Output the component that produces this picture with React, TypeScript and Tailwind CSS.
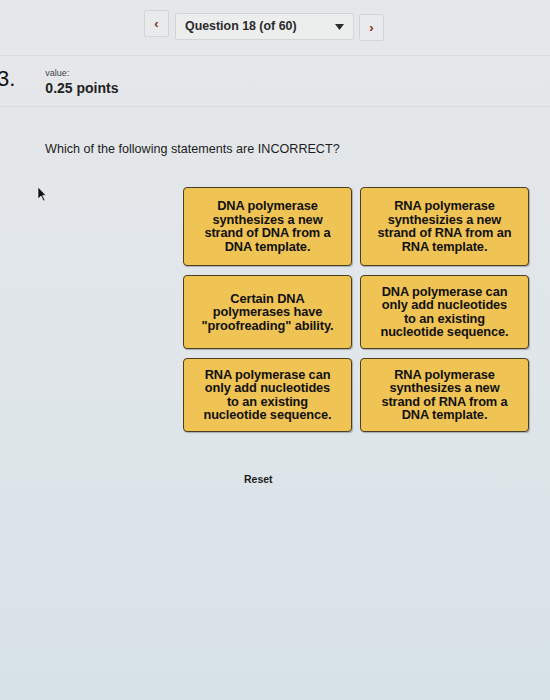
import React from "react";

const CARDS: string[][] = [
  ["DNA polymerase", "synthesizes a new", "strand of DNA from a", "DNA template."],
  ["RNA polymerase", "synthesizies a new", "strand of RNA from an", "RNA template."],
  ["Certain DNA", "polymerases have", "\"proofreading\" ability."],
  ["DNA polymerase can", "only add nucleotides", "to an existing", "nucleotide sequence."],
  ["RNA polymerase can", "only add nucleotides", "to an existing", "nucleotide sequence."],
  ["RNA polymerase", "synthesizes a new", "strand of RNA from a", "DNA template."],
];

function Card({ lines, tall }: { lines: string[]; tall?: boolean }) {
  return (
    <div
      className={`flex w-[169px] flex-col items-center justify-center rounded-[4px] border-[1.5px] border-[#4a3f22] bg-[#f0c355] text-center text-[12.8px] font-bold leading-[13.6px] tracking-[-0.1px] text-[#111] shadow-[1px_1px_1px_rgba(0,0,0,0.25)] ${
        tall ? "h-[79px]" : "h-[74px]"
      }`}
    >
      {lines.map((l) => (
        <span key={l} className="whitespace-nowrap">
          {l}
        </span>
      ))}
    </div>
  );
}

export default function App() {
  return (
    <div className="relative h-[700px] w-[550px] overflow-hidden bg-gradient-to-b from-[#e6e7e9] via-[#e0e6ea] to-[#d7e2e8] font-['Liberation_Sans',Arial,sans-serif] text-[#222]">
      {/* nav */}
      <div className="flex items-start pl-[144px] pt-[10px]">
        <button className="flex h-[27px] w-[25px] items-center justify-center rounded-[2px] border border-[#d2d5d7] bg-[#e9eaeb] text-[13px] font-bold text-[#8a2a12]">
          ‹
        </button>
        <div className="ml-[6px] mt-[3px] flex h-[27px] w-[179px] items-center justify-between rounded-[2px] border border-[#d2d5d7] bg-[#eceded] pl-[9px] pr-[9px]">
          <span className="text-[12.4px] font-bold text-[#2a2a2a]">Question 18 (of 60)</span>
          <svg width="9" height="6" viewBox="0 0 9 6">
            <path d="M0 0h9L4.5 6z" fill="#2a2a2a" />
          </svg>
        </div>
        <button className="ml-[5px] mt-[4px] flex h-[27px] w-[25px] items-center justify-center rounded-[2px] border border-[#d2d5d7] bg-[#e9eaeb] text-[13px] font-bold text-[#8a2a12]">
          ›
        </button>
      </div>

      <div className="mt-[14px] border-t border-[#d9dbdd]" />

      {/* value */}
      <div className="flex items-start pt-[12px]">
        <span className="ml-[-3px] text-[22px] leading-[22px] text-[#111]">3.</span>
        <div className="ml-[30px] flex flex-col">
          <span className="text-[9px] leading-[10px] text-[#444]">value:</span>
          <span className="mt-[3px] text-[14px] font-bold leading-[15px] text-[#222]">0.25 points</span>
        </div>
      </div>

      <div className="mt-[10px] border-t border-[#d9dbdd]" />

      <p className="ml-[45px] mt-[33px] text-[12.6px] text-[#1d1d1d]">
        Which of the following statements are INCORRECT?
      </p>

      {/* cards */}
      <div className="ml-[183px] mt-[28px] grid w-[346px] grid-cols-[169px_169px] gap-x-[8px] gap-y-[9px]">
        {CARDS.map((c, i) => (
          <Card key={i} lines={c} tall={i < 2} />
        ))}
      </div>

      <div className="ml-[244px] mt-[40px] text-[10.5px] font-bold text-[#1d1d1d]">Reset</div>

      {/* cursor */}
      <svg className="absolute left-[37px] top-[187px]" width="10" height="15" viewBox="0 0 10 15">
        <path d="M1 0v12l3-3 2.5 5 1.5-.7-2.4-4.9H9z" fill="#111" stroke="#fff" strokeWidth="0.6" />
      </svg>
    </div>
  );
}
